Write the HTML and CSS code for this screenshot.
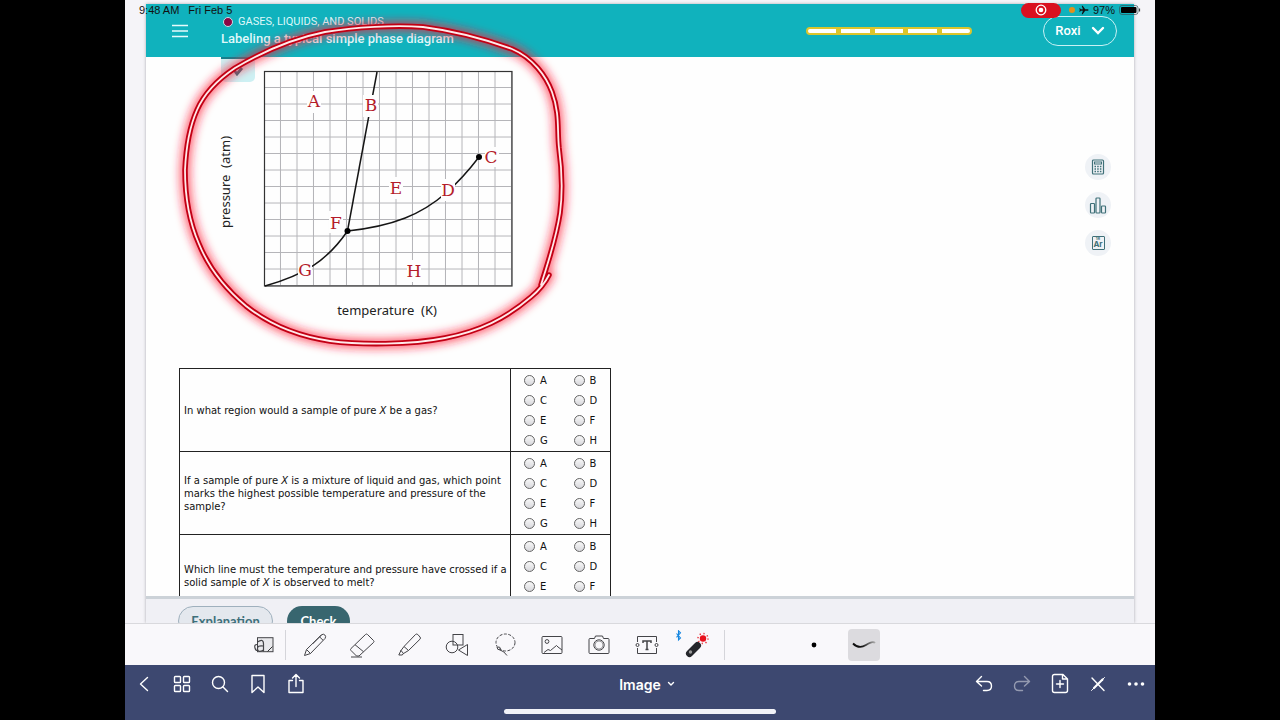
FILE: index.html
```html
<!DOCTYPE html>
<html lang="en">
<head>
<meta charset="utf-8">
<title>Labeling a typical simple phase diagram</title>
<link rel="stylesheet" href="styles.css">
</head>
<body>
<div class="device">
  <div class="status">
    <span>9:48 AM</span>
    <span>Fri Feb 5</span>
    <span class="status-right">
      <span class="rec"><svg width="12" height="12" viewBox="0 0 12 12"><circle cx="6" cy="6" r="4.8" fill="none" stroke="#fff" stroke-width="1.3"/><circle cx="6" cy="6" r="2.3" fill="#fff"/></svg></span>
      <span class="mic"></span>
      <svg width="10" height="10" viewBox="0 0 10 10"><path d="M9.6 5c0-.5-.6-.8-1.300-.8H6.200L3.700.7h-1l1.200 3.500H1.800L1 3.200H.3L.8 5 .3 6.800H1l.8-1h2.100L2.700 9.300h1l2.500-3.500h2.100c.7 0 1.300-.3 1.300-.8z" fill="#111"/></svg>
      <span>97%</span>
      <svg class="battery" width="22" height="10" viewBox="0 0 22 10"><rect x=".5" y=".5" width="18.500" height="9" rx="2.500" fill="none" stroke="#33555c" stroke-opacity=".7"/><rect x="2" y="2" width="15.500" height="6" rx="1" fill="#000"/><path d="M20.500 3.500v3" stroke="#444" stroke-width="1.200"/></svg>
    </span>
  </div>

  <main class="stage">
    <div class="sheet">
      <header class="header">
        <button class="menu" aria-label="Menu"><svg width="18" height="14" viewBox="0 0 18 14"><path d="M1 1.500h16M1 7h16M1 12.500h16" stroke="#e6fbfc" stroke-width="1.300"/></svg></button>
        <div class="titles">
          <div class="topic"><span class="topic-dot"></span>GASES, LIQUIDS, AND SOLIDS</div>
          <h1 class="title">Labeling a typical simple phase diagram</h1>
        </div>
        <div class="progress"><i></i><i></i><i></i><i></i><i></i></div>
        <button class="user">Roxi <svg width="14" height="10" viewBox="0 0 14 10"><path d="M2 2l5 5 5-5" fill="none" stroke="#fff" stroke-width="2.400" stroke-linecap="round"/></svg></button>
      </header>

      <section class="content">
        <button class="tab" aria-label="Collapse"><svg width="12" height="10" viewBox="0 0 12 10"><path d="M2 4l3 4 5-6" fill="none" stroke="#2a7482" stroke-width="2.800"/></svg></button>
        <div class="question">
          <svg class="figure" width="341" height="311" viewBox="0 0 341 311" role="img" aria-label="Phase diagram">
            <defs>
              <pattern id="grid" x="85.500" y="14.500" width="16.500" height="16.500" patternUnits="userSpaceOnUse"><path d="M16 0V16H0" fill="none" stroke="#b4b4b8"/></pattern>
            </defs>
            <rect x="85.500" y="14.500" width="247.500" height="214.500" fill="url(#grid)"/>
            <rect x="85.500" y="14.500" width="247.500" height="214.500" fill="none" stroke="#333" stroke-width="1.200"/>
            <g fill="none" stroke="#151515" stroke-width="1.500">
              <path d="M198 15L168.500 174"/>
              <path d="M168.500 174C215 169 243 157 267 136Q284 121 300 100"/>
              <path d="M86 229C125 218 148 204 168.500 174"/>
            </g>
            <circle cx="168.500" cy="174" r="3" fill="#000"/>
            <circle cx="300" cy="100" r="3" fill="#000"/>
            <g fill="#fefefe">
              <rect x="128" y="34" width="14" height="22"/><rect x="184" y="38" width="15" height="22"/>
              <rect x="306" y="90" width="14" height="20"/><rect x="262" y="122" width="14" height="22"/>
              <rect x="210" y="120" width="14" height="22"/><rect x="150" y="154" width="14" height="22"/>
              <rect x="119" y="202" width="14" height="22"/><rect x="228" y="203" width="14" height="22"/>
            </g>
            <g class="points">
              <text x="135" y="50">A</text><text x="192" y="54">B</text><text x="312" y="106">C</text><text x="269" y="139">D</text>
              <text x="217" y="137">E</text><text x="157" y="172">F</text><text x="126" y="219">G</text><text x="235" y="220">H</text>
            </g>
            <text class="axis" x="208" y="258">temperature&#160; (K)</text>
            <text class="axis" transform="translate(51 125) rotate(-90)">pressure&#160; (atm)</text>
          </svg>

          <table class="quiz">
            <tbody>
            <tr>
              <td class="prompt">In what region would a sample of pure <em>X</em> be a gas?</td>
              <td><div class="options">
                <label><input type="radio" name="q1">A</label><label><input type="radio" name="q1">B</label>
                <label><input type="radio" name="q1">C</label><label><input type="radio" name="q1">D</label>
                <label><input type="radio" name="q1">E</label><label><input type="radio" name="q1">F</label>
                <label><input type="radio" name="q1">G</label><label><input type="radio" name="q1">H</label>
              </div></td>
            </tr>
            <tr>
              <td class="prompt">If a sample of pure <em>X</em> is a mixture of liquid and gas, which point marks the highest possible temperature and pressure of the sample?</td>
              <td><div class="options">
                <label><input type="radio" name="q2">A</label><label><input type="radio" name="q2">B</label>
                <label><input type="radio" name="q2">C</label><label><input type="radio" name="q2">D</label>
                <label><input type="radio" name="q2">E</label><label><input type="radio" name="q2">F</label>
                <label><input type="radio" name="q2">G</label><label><input type="radio" name="q2">H</label>
              </div></td>
            </tr>
            <tr>
              <td class="prompt">Which line must the temperature and pressure have crossed if a solid sample of <em>X</em> is observed to melt?</td>
              <td><div class="options">
                <label><input type="radio" name="q3">A</label><label><input type="radio" name="q3">B</label>
                <label><input type="radio" name="q3">C</label><label><input type="radio" name="q3">D</label>
                <label><input type="radio" name="q3">E</label><label><input type="radio" name="q3">F</label>
              </div></td>
            </tr>
            </tbody>
          </table>
        </div>

        <aside class="side">
          <button aria-label="Calculator"><svg width="14" height="16" viewBox="0 0 14 16" fill="none" stroke="#3f7078"><rect x="1.500" y="1" width="11" height="14" rx="1" stroke-width="1.200"/><rect x="3.500" y="3" width="7" height="2"/><path d="M3.500 7.500h7M3.500 10h7M3.500 12.500h7" stroke-width="1.500" stroke-dasharray="1.500 1.200"/></svg></button>
          <button aria-label="Data"><svg width="18" height="17" viewBox="0 0 18 17" fill="none" stroke="#3f7078" stroke-width="1.200"><rect x="1.500" y="6.500" width="4" height="9.500" rx=".8"/><rect x="7" y="1" width="4" height="15" rx=".8"/><rect x="12.500" y="9" width="4" height="7" rx=".8"/></svg></button>
          <button class="element" aria-label="Periodic table"><span><small>18</small>Ar</span></button>
        </aside>
      </section>

      <footer class="actions">
        <button class="explain">Explanation</button>
        <button class="check">Check</button>
      </footer>
    </div>
  </main>

  <div class="toolbar">
    <button class="tool" aria-label="Zoom window"><svg width="20" height="16" viewBox="0 0 20 16" fill="none" stroke="#55555a"><rect x="3.500" y=".7" width="15.500" height="14" fill="#e9e9ec"/><path d="M3.500 5Q9.500 1 9.500 7v7.500M9.500 9Q3 8 3.500 12T9.500 13M3 7.500Q0 7.500 1 11t3 2" stroke-width="1.200"/><path d="M18.500 9.500l-5 5" stroke="#333"/></svg></button>
    <span class="rule"></span>
    <div class="tools">
      <button class="tool" aria-label="Pen"><svg width="24" height="24" viewBox="0 0 24 24"><path d="M1.500 22.500l2-6L18.500 1.800q2-1.300 3.400.2t.2 3.400L7.500 20.500zM16.500 3.800l3.600 3.500M18.500 2L9.500 11M3.500 16.500l4 4"/></svg></button>
      <button class="tool" aria-label="Eraser"><svg width="26" height="26" viewBox="0 0 26 26"><path d="M2 16.500L16.500 2.500q1-1 2 0l6 6q1 1 0 2L10 24H7.500L2 18.500q-1-1 0-2zM6 12.700l8.500 7M2 25h11"/></svg></button>
      <button class="tool" aria-label="Highlighter"><svg width="24" height="24" viewBox="0 0 24 24"><path d="M6 13.500L17.500 1.500q1.200-1 2.300 0L22 4q1 1 0 2.200L10.500 17.500 5.500 20.500l-2.500-3zM6 13.500l4.500 4M3.200 17l-2.400 5h3.500l1.200-1.800"/></svg></button>
      <button class="tool" aria-label="Shapes"><svg width="24" height="24" viewBox="0 0 24 24"><circle cx="7" cy="14" r="5.800"/><rect x="8" y="1.500" width="10" height="10.500"/><path d="M13.500 17l9-5.500v11z"/></svg></button>
      <button class="tool" aria-label="Lasso"><svg width="24" height="24" viewBox="0 0 24 24"><ellipse cx="12.500" cy="9.500" rx="9.500" ry="8.500" stroke-dasharray="3 1.500"/><path d="M4 14q0 3 3 3 4 1 7 5.500M5 14q2-1 3 3"/></svg></button>
      <button class="tool" aria-label="Image"><svg width="24" height="22" viewBox="0 0 24 22"><rect x="2" y="2.500" width="20" height="17" rx="1"/><circle cx="7" cy="7.500" r="1.900"/><path d="M4 18.500l4-3 2.500 1 6-5 1.500 1.500 4 3"/></svg></button>
      <button class="tool" aria-label="Camera"><svg width="24" height="22" viewBox="0 0 24 22"><path d="M3 4.500h4.500l1-2.500h7l1 2.500H21q1 0 1 1v13q0 1-1 1H3q-1 0-1-1v-13q0-1 1-1z"/><circle cx="12" cy="11" r="5.200"/><circle cx="12" cy="11" r="4" stroke-width=".5"/></svg></button>
      <button class="tool" aria-label="Text"><svg width="24" height="22" viewBox="0 0 24 22"><path d="M2.500 8V2.500h19V8M2.500 14v5.500h19V14"/><circle cx="2.500" cy="11" r="1.500"/><circle cx="21.500" cy="11" r="1.500"/><path d="M8 9V7h8v2M12 7v8.500M10.500 15.500h3" stroke-width="1.500"/></svg></button>
      <button class="tool" aria-label="Laser pointer"><svg class="laser" width="38" height="30" viewBox="0 0 38 30"><path d="M1.500 3.500l4 4.500L3.500 10V.8l2 2-4 4.500" fill="none" stroke="#1787e0" stroke-width="1.100"/><path d="M14.500 23.500l8-8" stroke="#25262b" stroke-width="7" stroke-linecap="round"/><circle cx="15.500" cy="22" r="1.700" fill="#999"/><circle cx="28" cy="8.500" r="3.200" fill="#e8101c"/><circle cx="28" cy="8.500" r="5" fill="none" stroke="#e8303a" stroke-width="1.500" stroke-dasharray="1.200 2.700"/></svg></button>
    </div>
    <span class="rule rule-end"></span>
    <button class="tool dot" aria-label="Dot pointer"><svg width="6" height="6" viewBox="0 0 6 6"><circle cx="3" cy="3" r="2.400" fill="#000" stroke="none"/></svg></button>
    <button class="tool wave" aria-label="Trail pointer"><svg width="24" height="10" viewBox="0 0 24 10"><defs><linearGradient id="fade"><stop offset=".4" stop-color="#111"/><stop offset="1" stop-color="#aaa"/></linearGradient></defs><path d="M1 3.500Q7 9.500 14 5T23 3" fill="none" stroke="url(#fade)" stroke-width="1.800"/></svg></button>
  </div>

  <nav class="nav">
    <div class="nav-row">
      <div class="group">
        <button aria-label="Back"><svg viewBox="0 0 22 22"><path d="M14.500 4.500L7.500 11l7 6.500"/></svg></button>
        <button aria-label="Thumbnails"><svg viewBox="0 0 22 22"><rect x="3.500" y="3.500" width="6" height="6" rx=".8"/><rect x="12.500" y="3.500" width="6" height="6" rx=".8"/><rect x="3.500" y="12.500" width="6" height="6" rx=".8"/><rect x="12.500" y="12.500" width="6" height="6" rx=".8"/></svg></button>
        <button aria-label="Search"><svg viewBox="0 0 22 22"><circle cx="9.500" cy="9.500" r="6"/><path d="M14 14l4.500 4.500"/></svg></button>
        <button aria-label="Bookmark"><svg viewBox="0 0 22 22"><path d="M5 2.500h12v17l-6-5.500-6 5.500z"/></svg></button>
        <button aria-label="Share"><svg viewBox="0 0 22 22"><path d="M7.500 7.500H4v12h14v-12h-3.500M11 13.500V2M7.500 5L11 1.500 14.500 5"/></svg></button>
      </div>
      <button class="doc">Image <svg class="caret" viewBox="0 0 8 8"><path d="M1.500 2.500L4 5l2.500-2.500"/></svg></button>
      <div class="group group-end">
        <button aria-label="Undo"><svg viewBox="0 0 22 22"><path d="M8.500 3.500L3.500 8.500l5 4.500M3.500 8.500h10.500q4.500 0 4.500 4.500t-4.500 4.500h-3.500"/></svg></button>
        <button aria-label="Redo" disabled><svg viewBox="0 0 22 22"><path d="M13.500 3.500l5 5-5 4.500M18.500 8.500H8q-4.500 0-4.500 4.500T8 17.500h3.500"/></svg></button>
        <button aria-label="Add page"><svg viewBox="0 0 22 22"><path d="M3.500 3.500q0-2 2-2H14l4.500 4.500v11.500q0 2-2 2h-11q-2 0-2-2zM13.500 1.500V6h5M11 7.500v7M7.500 11h7"/></svg></button>
        <button aria-label="Read only"><svg viewBox="0 0 22 22"><path d="M5 5l12 12.500"/><path d="M7 15L15.500 6.500" stroke-width="2.200"/><path d="M4.500 17.500L17.500 4.500" stroke-width="1"/></svg></button>
        <button aria-label="More"><svg viewBox="0 0 22 22"><g fill="#fff" stroke="none"><circle cx="4.500" cy="11" r="1.800"/><circle cx="11" cy="11" r="1.800"/><circle cx="17.500" cy="11" r="1.800"/></g></svg></button>
      </div>
    </div>
    <div class="home"></div>
  </nav>

  <svg class="ink" width="410" height="350" viewBox="170 10 410 350" fill="none" stroke-linecap="round" stroke-linejoin="round">
    <defs>
      <path id="loop" d="M549 275Q543 287 531 297C505 319 480 331 445 338C410 345 360 345 330 341C296 336 270 325 246 306C222 286 208 266 199 244C188 219 185 195 185 170C186 148 189 128 197 110C204 94 217 80 235 68C262 52 290 39 325 32C355 27 395 25 423 27C455 31 490 41 512 49C533 58 546 76 552 92C560 114 557 130 559 148C562 170 563 190 560 213C556 240 548 262 541 285"/>
      <filter id="glow" x="-10%" y="-10%" width="120%" height="120%"><feGaussianBlur stdDeviation="4"/></filter>
    </defs>
    <use href="#loop" stroke="#ff2038" stroke-opacity=".65" stroke-width="11" filter="url(#glow)"/>
    <use href="#loop" stroke="#c20014" stroke-width="5.500"/>
    <use href="#loop" stroke="#ffe9ea" stroke-width="1.800"/>
  </svg>
</div>
</body>
</html>
```

FILE: styles.css
```css
* { box-sizing: border-box; }

body {
  margin: 0;
  background: #000;
  font-family: "Inter", "Liberation Sans", sans-serif;
  color: #111;
}

button {
  margin: 0;
  padding: 0;
  border: 0;
  background: none;
  font: inherit;
  color: inherit;
}

svg { display: block; }

.device {
  position: relative;
  display: flex;
  flex-direction: column;
  height: 100vh;
  margin: 0 125px;
  overflow: hidden;
  background: #f5f4f8;
}

/* status bar */
.status {
  position: absolute;
  z-index: 2;
  top: 0;
  left: 0;
  right: 0;
  display: flex;
  align-items: center;
  gap: 9px;
  height: 20px;
  padding: 0 14px;
  font-family: "Liberation Sans", sans-serif;
  font-size: 11px;
}

.status-right {
  display: flex;
  align-items: center;
  gap: 4px;
  margin-left: auto;
}

.rec {
  display: grid;
  place-items: center;
  width: 40px;
  height: 15px;
  margin-right: 4px;
  border-radius: 8px;
  background: #d9101f;
}

.mic {
  width: 6px;
  height: 6px;
  border-radius: 50%;
  background: #e2901c;
}

/* page */
.stage {
  display: flex;
  flex: 1;
  min-height: 0;
  padding: 4px 21px 0;
}

.sheet {
  display: flex;
  flex: 1;
  flex-direction: column;
  min-width: 0;
  background: #fefefe;
  box-shadow: 0 0 3px #a9a9b0;
}

.header {
  display: flex;
  align-items: center;
  height: 53px;
  padding: 0 17px 0 25px;
  background: #10b2bd;
  color: #dff8fa;
  font-family: "Roboto", sans-serif;
}

.menu { margin-right: 32px; }

.topic {
  display: flex;
  align-items: center;
  gap: 5px;
  padding-left: 2px;
  font-size: 11px;
  line-height: 16px;
}

.topic-dot {
  width: 10px;
  height: 10px;
  border: 1px solid #c8dfe6;
  border-radius: 50%;
  background: #8c0644;
}

.title {
  margin: 0;
  font-size: 13px;
  font-weight: 500;
  line-height: 17px;
}

.progress {
  display: flex;
  gap: 5px;
  width: 166px;
  height: 8px;
  margin-left: auto;
  padding: 2px;
  border-radius: 4px;
  background: #dcc52c;
}

.progress i {
  flex: 1;
  background: #fff;
}

.progress i:first-child { border-radius: 2px 0 0 2px; }
.progress i:last-child { border-radius: 0 2px 2px 0; }

.user {
  display: flex;
  align-items: center;
  justify-content: center;
  gap: 10px;
  width: 74px;
  height: 30px;
  margin-left: 71px;
  border: 1px solid #c7f1f4;
  border-radius: 15px;
  color: #fff;
  font-size: 13px;
  font-weight: 500;
}

.content {
  position: relative;
  display: flex;
  flex: 1;
  justify-content: space-between;
  min-height: 0;
  padding: 0 23px 0 33px;
  overflow: hidden;
}

.tab {
  position: absolute;
  top: 0;
  left: 75px;
  display: grid;
  place-items: center;
  width: 34px;
  height: 25px;
  border-top: 2px solid #14808c;
  border-radius: 0 0 5px 5px;
  background: #cdf0f3;
}

.question { width: 432px; }

.figure { position: relative; }

.points {
  fill: #b41c2a;
  font-family: "DejaVu Serif", serif;
  font-size: 17px;
  text-anchor: middle;
}

.axis {
  fill: #222;
  font-family: "Noto Sans", sans-serif;
  font-size: 13px;
  text-anchor: middle;
}

.quiz {
  width: 432px;
  border-collapse: collapse;
  table-layout: fixed;
  font-family: "DejaVu Sans", sans-serif;
  font-size: 10px;
  line-height: 13px;
}

.quiz td {
  padding: 0;
  border: 1px solid #222;
}

.quiz td.prompt {
  width: 331px;
  padding: 0 0 0 4px;
}

.options {
  display: grid;
  grid-template-columns: 1fr 1fr;
  grid-template-rows: repeat(4, 1fr);
  height: 82px;
  padding-top: 1px;
}

.options label {
  display: flex;
  align-items: center;
  gap: 5px;
  padding-left: 13px;
}

.options input {
  width: 11px;
  height: 11px;
  margin: 0;
  appearance: none;
  border: 1px solid #666;
  border-radius: 50%;
  background: linear-gradient(#f8f8f8, #d8d8dc);
}

.side {
  display: flex;
  flex-direction: column;
  gap: 12px;
  padding-top: 97px;
}

.side button {
  display: grid;
  place-items: center;
  width: 26px;
  height: 26px;
  border-radius: 50%;
  background: #eff2f6;
}

.element span {
  width: 13px;
  height: 14px;
  border: 1px solid #3f7078;
  border-radius: 1px;
  color: #3f7078;
  font-size: 8px;
  font-weight: 700;
  line-height: 7px;
}

.element small {
  display: block;
  font-size: 4px;
  line-height: 4px;
}

.actions {
  display: flex;
  gap: 14px;
  height: 27px;
  padding: 7px 32px 0;
  overflow: hidden;
  border-top: 3px solid #ccd2d8;
  background: #f0f0f5;
  font-family: "Lato", sans-serif;
  font-size: 13px;
  font-weight: 700;
}

.actions button {
  height: 30px;
  border-radius: 15px;
}

.explain {
  width: 95px;
  border: 1px solid #9fb0bd;
  background: #e4e8ee;
  color: #3d6f7a;
}

.check {
  width: 63px;
  background: #38666f;
  color: #fff;
}

/* drawing tools */
.toolbar {
  display: flex;
  align-items: center;
  height: 42px;
  padding-left: 123px;
  border-top: 1px solid #d9d9dd;
  background: #f9f8fb;
}

.tool {
  display: grid;
  place-content: center;
  width: 32px;
  height: 32px;
}

.tool svg {
  fill: none;
  stroke: #444448;
  stroke-width: 1;
}

.tools {
  display: flex;
  justify-content: space-between;
  width: 411px;
  margin-left: 13px;
}

.tools .laser {
  stroke: none;
}

.rule {
  width: 1px;
  height: 30px;
  margin-left: 5px;
  background: #d5d5da;
}

.rule-end { margin-left: 14px; }

.dot { margin-left: 73px; }

.wave {
  margin-left: 18px;
  border-radius: 4px;
  background: #dcdbdf;
}

/* bottom navigation */
.nav {
  height: 55px;
  background: #3d4870;
  color: #fff;
}

.nav-row {
  display: grid;
  grid-template-columns: 1fr auto 1fr;
  align-items: center;
  height: 38px;
  padding: 0 8px;
}

.group {
  display: flex;
  gap: 16px;
}

.group-end { justify-content: flex-end; }

.nav svg {
  width: 22px;
  height: 22px;
  fill: none;
  stroke: #fff;
  stroke-width: 1.4;
  stroke-linecap: round;
  stroke-linejoin: round;
}

.nav button:disabled { opacity: 0.45; }

.doc {
  display: flex;
  align-items: center;
  gap: 6px;
  padding-left: 14px;
  font-size: 14px;
  font-weight: 600;
}

.nav .caret {
  width: 8px;
  height: 8px;
}

.home {
  width: 272px;
  height: 5px;
  margin: 6px auto 0;
  border-radius: 3px;
  background: #f1f2f8;
}

/* laser stroke drawn over the page */
.ink {
  position: absolute;
  z-index: 3;
  top: 10px;
  left: 45px;
  pointer-events: none;
}
```
